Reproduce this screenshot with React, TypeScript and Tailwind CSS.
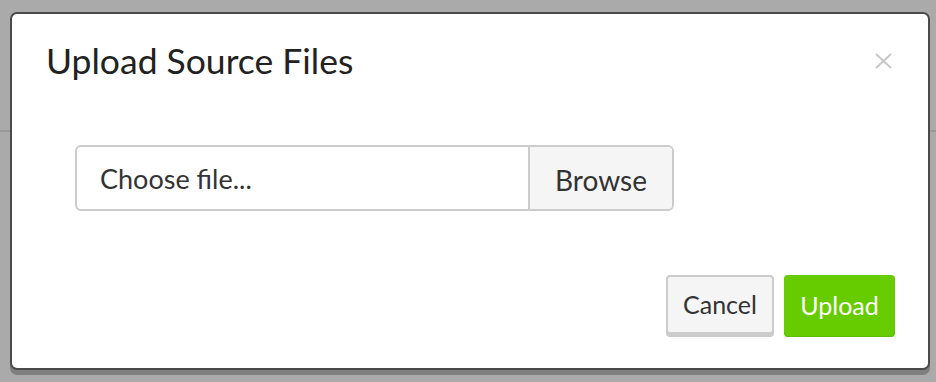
export default function App() {
  return (
    <div
      className="relative h-[382px] w-[936px] overflow-hidden bg-[#aaaaaa]"
      style={{ fontFamily: "Lato, 'Open Sans', sans-serif" }}
    >
      <div className="h-[132px] border-b-2 border-[#999999]" />

      <div className="absolute left-[10px] top-[12px] flex h-[358px] w-[920px] flex-col rounded-[7px] border-2 border-[#4a4a4a] bg-white shadow-[0_5px_0_rgba(0,0,0,0.25)]">
        <div className="flex items-start justify-between pl-[34px] pr-[36px] pt-[27px]">
          <h2 className="text-[35.5px] leading-[40px] font-normal text-[#222222]">Upload Source Files</h2>
          <button className="mt-[12px] text-[#c8c8c8]" aria-label="Close">
            <svg width="17" height="16" viewBox="0 0 17 16" fill="none" stroke="currentColor" strokeWidth="2">
              <path d="M1 1 L16 15 M16 1 L1 15" />
            </svg>
          </button>
        </div>

        <div className="pl-[63px] pt-[64px]">
          <div className="flex h-[66px] w-[599px] overflow-hidden rounded-[6px] border-2 border-[#cccccc]">
            <div className="flex flex-1 items-center pl-[23px] pt-[3px] text-[27px] text-[#333333]">Choose file...</div>
            <div className="flex w-[144px] items-center justify-center border-l-2 border-[#cccccc] bg-[#f5f5f5] pt-[3px] text-[28px] text-[#333333]">
              Browse
            </div>
          </div>
        </div>

        <div className="mt-auto flex justify-end gap-[10px] pb-[32px] pr-[33px]">
          <button className="h-[59px] w-[108px] rounded-[4px] border-2 border-[#cccccc] bg-[#f5f5f5] text-[25px] text-[#333333] shadow-[0_3px_0_#cccccc]">
            Cancel
          </button>
          <button className="h-[61px] w-[111px] rounded-[4px] bg-[#66cc00] text-[25px] text-white shadow-[0_1px_0_#5cb800]">
            Upload
          </button>
        </div>
      </div>
    </div>
  );
}
